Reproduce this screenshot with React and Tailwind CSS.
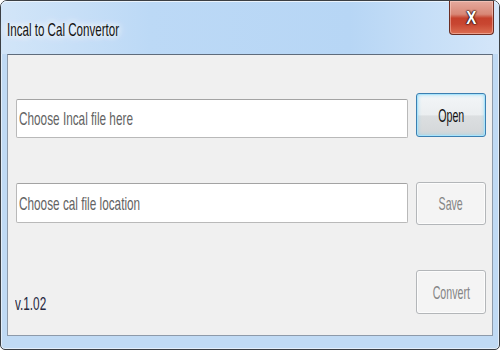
import React from 'react'

const font = { fontFamily: '"Liberation Sans", Arial, sans-serif' }

const Field = ({ placeholder, className }) => (
  <div
    className={`flex flex-1 items-center overflow-hidden rounded-[2px] border border-[#b9b9b9] border-t-[#a3a3a3] bg-white pl-[2px] ${className}`}
  >
    <span className="inline-block origin-left scale-x-[0.62] whitespace-nowrap text-[19px] leading-none text-[#636363]">
      {placeholder}
    </span>
  </div>
)

const WinButton = ({ text, active, className }) => (
  <button
    type="button"
    disabled={!active}
    className={
      active
        ? `flex w-[70px] items-center justify-center rounded-[3px] border border-[#3c7fb1] bg-[linear-gradient(to_bottom,#f3f6f8_0%,#ebeef0_50%,#dcdfe1_52%,#d3d6d8_100%)] shadow-[inset_0_0_0_1px_#a9e4fb,inset_0_0_4px_#7fd3f7] ${className}`
        : `flex w-[70px] items-center justify-center rounded-[3px] border border-[#b3b6b9] bg-[#f4f4f4] shadow-[inset_0_0_0_1px_#fcfcfc] ${className}`
    }
  >
    <span
      className={`inline-block scale-x-[0.56] text-[19px] leading-none ${active ? 'text-[#111]' : 'text-[#858585]'}`}
    >
      {text}
    </span>
  </button>
)

export default function App() {
  return (
    <div className="h-[350px] w-[500px] bg-white" style={font}>
      <div className="flex h-full flex-col rounded-t-[7px] rounded-b-[5px] border border-[#3b3f44] bg-[#c0daf4] shadow-[inset_0_0_0_1px_rgba(255,255,255,0.55)]">
        {/* title bar */}
        <div className="relative flex h-[53px] shrink-0 items-start rounded-t-[6px] bg-[linear-gradient(to_right,#d2e5f8_0%,#bcd9f6_30%,#b7d6f5_70%,#d4e6f9_100%)] pl-[6px] pt-[19px] shadow-[inset_0_1px_0_#eaf3fc]">
          <span className="inline-block origin-left scale-x-[0.61] whitespace-nowrap text-[19px] leading-none text-[#141414] [text-shadow:0_0_8px_#fff,0_0_12px_#fff,0_0_16px_#fff]">
            Incal to Cal Convertor
          </span>
          <div className="absolute right-[5px] top-0 flex h-[34px] w-[45px] items-center justify-center rounded-b-[4px] border border-t-0 border-[#6b2d22] bg-[linear-gradient(to_bottom,#e4aa9e_0%,#d88776_40%,#c5412c_52%,#c84631_70%,#dc6e52_100%)] shadow-[inset_0_0_0_1px_rgba(255,220,210,0.45)]">
            <span className="inline-block scale-x-[0.8] text-[19px] font-bold leading-none text-white [text-shadow:0_0_1px_#2e1410,0_0_1px_#2e1410,0_0_2px_#2e1410,0_0_2px_#2e1410]">
              X
            </span>
          </div>
        </div>

        {/* client area */}
        <div className="mx-[6px] flex flex-1 flex-col border border-[#8d9aaa] border-t-[#5f6c7c] bg-[#f0f0f0] pb-[21px] pl-[8px] pr-[6px] pt-[38px]">
          <div className="flex items-start gap-[8px]">
            <Field placeholder="Choose Incal file here" className="mt-[6px] h-[39px]" />
            <WinButton text="Open" active className="h-[44px]" />
          </div>

          <div className="mt-[44px] flex items-start gap-[8px]">
            <Field placeholder="Choose cal file location" className="mt-[1px] h-[40px]" />
            <WinButton text="Save" className="h-[43px]" />
          </div>

          <div className="mt-auto flex items-end justify-between">
            <span className="mb-[1px] ml-[-1px] inline-block origin-left scale-x-[0.62] text-[19px] leading-none text-[#262840]">
              v.1.02
            </span>
            <WinButton text="Convert" className="h-[44px]" />
          </div>
        </div>

        {/* bottom frame */}
        <div className="h-[13px] shrink-0" />
      </div>
    </div>
  )
}
